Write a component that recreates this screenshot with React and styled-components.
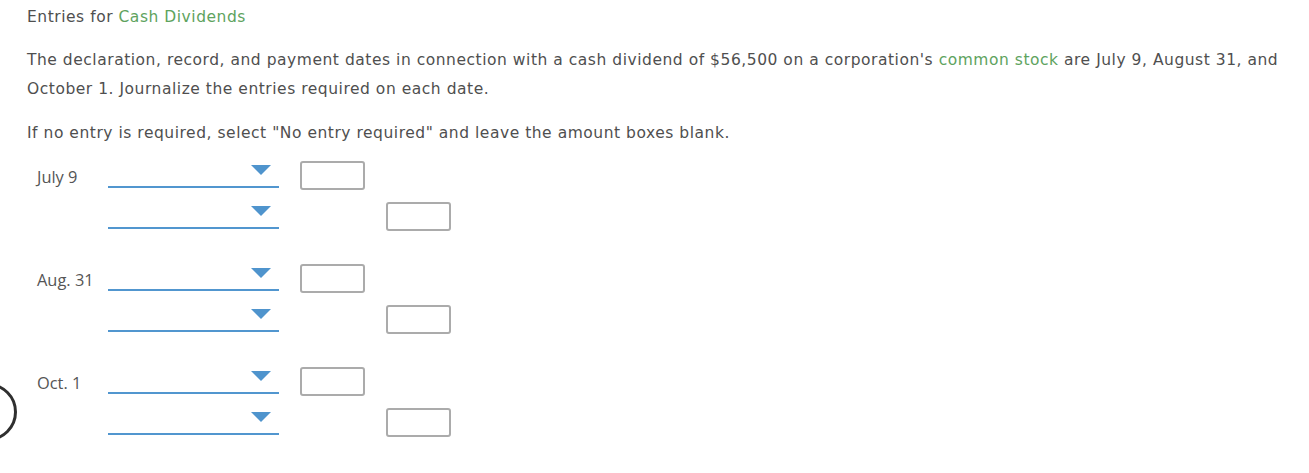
import React from 'react';
import styled, { createGlobalStyle } from 'styled-components';

const GlobalStyle = createGlobalStyle`
  body {
    margin: 0;
    background: #fff;
    font-family: 'DejaVu Sans', Verdana, sans-serif;
  }
`;

const Page = styled.div`
  position: relative;
  height: 473px;
  overflow: hidden;
  padding: 3px 27px 0;
  color: #4f4f4f;
  font-size: 15.5px;
  letter-spacing: 0.53px;
  line-height: 29px;
`;

const Title = styled.div``;

const Para = styled.p`
  margin: ${(p) => p.$top}px 0 0;
`;

const Link = styled.span`
  color: #5ea35e;
`;

const Entries = styled.div`
  margin-top: 13px;
  display: flex;
  flex-direction: column;
  gap: 21px;
`;

const Group = styled.div`
  display: grid;
  grid-template-columns: 60px 171px 64px 64px;
  grid-auto-rows: 41px;
  column-gap: 21px;
`;

const DateLabel = styled.div`
  grid-column: 1;
  padding: 6px 0 0 10px;
  font-family: 'Open Sans', sans-serif;
  font-size: 16.4px;
  letter-spacing: 0;
  line-height: 20px;
  color: #555;
  white-space: nowrap;
`;

const Select = styled.div`
  grid-column: 2;
  height: 21px;
  border-bottom: 2px solid #5196cf;
  display: flex;
  justify-content: flex-end;
  padding: 4px 8px 0 0;
`;

const Caret = styled.span`
  width: 0;
  height: 0;
  border-left: 10px solid transparent;
  border-right: 10px solid transparent;
  border-top: 10px solid #4f94cd;
`;

const Amount = styled.div`
  grid-column: ${(p) => (p.$credit ? 4 : 3)};
  box-sizing: border-box;
  width: 65px;
  height: 29px;
  border: 2px solid #ababab;
  border-radius: 3px;
  margin-left: ${(p) => (p.$credit ? 1 : 0)}px;
`;

const Ring = styled.div`
  position: absolute;
  left: -41px;
  top: 383px;
  width: 52px;
  height: 52px;
  border: 3px solid #2f2f2f;
  border-radius: 50%;
`;

const dates = ['July 9', 'Aug. 31', 'Oct. 1'];

const EntryGroup = ({ date }) => (
  <Group>
    <DateLabel>{date}</DateLabel>
    <Select>
      <Caret />
    </Select>
    <Amount />
    <div />
    <Select>
      <Caret />
    </Select>
    <Amount $credit />
  </Group>
);

export default function App() {
  return (
    <>
      <GlobalStyle />
      <Page>
        <Title>
          Entries for <Link>Cash Dividends</Link>
        </Title>
        <Para $top={14}>
          The declaration, record, and payment dates in connection with a cash
          dividend of $56,500 on a corporation's <Link>common stock</Link> are
          July 9, August 31, and October 1. Journalize the entries required on
          each date.
        </Para>
        <Para $top={15}>
          If no entry is required, select "No entry required" and leave the
          amount boxes blank.
        </Para>
        <Entries>
          {dates.map((d) => (
            <EntryGroup key={d} date={d} />
          ))}
        </Entries>
        <Ring />
      </Page>
    </>
  );
}
